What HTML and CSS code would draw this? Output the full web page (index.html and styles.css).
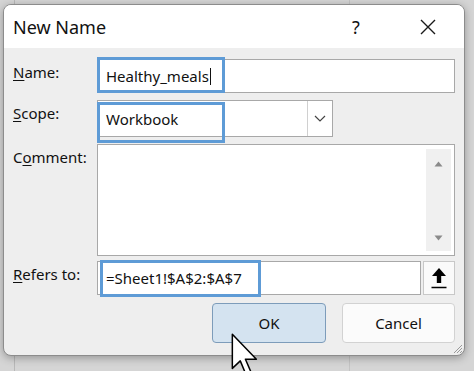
FILE: index.html
```html
<!DOCTYPE html>
<html lang="en">
<head>
    <meta charset="UTF-8">
    <title>New Name</title>
    <link rel="stylesheet" href="styles.css">
</head>
<body>
    <div class="dialog">
        <div class="titlebar">
            <span class="title">New Name</span>
            <span class="help">?</span>
            <svg class="close" width="16" height="16" viewBox="0 0 16 16">
                <path d="M1 1 L15 15 M15 1 L1 15" stroke="#1a1a1a" stroke-width="1.4" fill="none"/>
            </svg>
        </div>
        <div class="content">
            <div class="row row-name">
                <label class="label"><u>N</u>ame:</label>
                <div class="field field-name">
                    <span class="value">Healthy_meals</span><span class="caret"></span>
                    <div class="mark mark-name"></div>
                </div>
            </div>
            <div class="row row-scope">
                <label class="label"><u>S</u>cope:</label>
                <div class="field field-scope">
                    <span class="value">Workbook</span>
                    <div class="dropdown">
                        <svg width="12" height="7" viewBox="0 0 12 7">
                            <path d="M1 1 L6 6 L11 1" stroke="#444" stroke-width="1.2" fill="none"/>
                        </svg>
                    </div>
                    <div class="mark mark-scope"></div>
                </div>
            </div>
            <div class="row row-comment">
                <label class="label">C<u>o</u>mment:</label>
                <div class="field field-comment">
                    <div class="scrollbar">
                        <svg width="9" height="6" viewBox="0 0 9 6"><path d="M0.5 5.5 L4.5 0.5 L8.5 5.5 Z" fill="#8a8a8a"/></svg>
                        <svg width="9" height="6" viewBox="0 0 9 6"><path d="M0.5 0.5 L4.5 5.5 L8.5 0.5 Z" fill="#8a8a8a"/></svg>
                    </div>
                </div>
            </div>
            <div class="row row-refers">
                <label class="label"><u>R</u>efers to:</label>
                <div class="field field-refers">
                    <span class="value">=Sheet1!$A$2:$A$7</span>
                    <div class="mark mark-refers"></div>
                </div>
                <div class="collapse">
                    <svg width="18" height="24" viewBox="0 0 18 24">
                        <path d="M9 2 L16 10 L11.2 10 L11.2 17 L6.8 17 L6.8 10 L2 10 Z" fill="#000"/>
                        <path d="M1.5 21.5 L16.5 21.5" stroke="#000" stroke-width="1.4"/>
                    </svg>
                </div>
            </div>
            <div class="buttons">
                <button class="btn btn-ok">OK</button>
                <button class="btn btn-cancel">Cancel</button>
            </div>
        </div>
        <svg class="grip" width="12" height="12" viewBox="0 0 12 12">
            <path d="M11 3 L3 11 M11 6 L6 11 M11 9 L9 11" stroke="#9a9a9a" stroke-width="1"/>
        </svg>
    </div>
    <svg class="pointer" width="28" height="44" viewBox="0 0 13 20.5">
        <path d="M0.6 0.6 L0.6 16.5 L4.3 13 L6.8 19 L9.2 18 L6.7 12.2 L11.8 12.2 Z" fill="#fff" stroke="#000" stroke-width="0.7" stroke-linejoin="round"/>
    </svg>
</body>
</html>
```

FILE: styles.css
```css
body {
    margin: 0;
    width: 474px;
    height: 371px;
    overflow: hidden;
    position: relative;
    font-family: "Noto Sans", "Open Sans", sans-serif;
    color: #111;
    background-color: #d5d5d5;
    background-image:
        linear-gradient(to right, transparent 14px, #b8b8b8 14px, #b8b8b8 15px, transparent 15px),
        linear-gradient(to right, transparent 349px, #c4c4c4 349px, #c4c4c4 350px, transparent 350px);
}

.dialog {
    position: relative;
    margin: 4px 0 0 3px;
    width: 460px;
    height: 350px;
    border: 1px solid #8c8c8c;
    border-radius: 8px;
    overflow: hidden;
    background: #eeeeee;
    box-shadow: 0 2px 8px rgba(0, 0, 0, 0.3);
}

.titlebar {
    height: 43px;
    background: #ffffff;
    display: flex;
    align-items: center;
    padding: 0 0 0 9px;
}
.title {
    font-size: 18px;
    flex: 1;
    padding-top: 1px;
}
.help {
    font-size: 18px;
    width: 20px;
    margin-right: 48px;
    padding-top: 1px;
}
.close {
    margin-right: 28px;
}

.content {
    padding: 11px 9px 0 9px;
}
.row {
    display: flex;
}
.label {
    width: 84px;
    flex: none;
    font-size: 15px;
    line-height: 20px;
    padding-top: 3px;
}
.label u {
    text-underline-offset: 2px;
}

.field {
    position: relative;
    box-sizing: border-box;
    background: #ffffff;
    border: 1px solid #a8a8a8;
    display: flex;
    align-items: center;
    font-size: 15px;
}
.value {
    padding-left: 8px;
}

.row-name {
    height: 34px;
    margin-bottom: 7px;
}
.field-name {
    flex: 1;
}
.caret {
    width: 1px;
    height: 17px;
    background: #111;
    margin-left: 1px;
}

.row-scope {
    height: 37px;
    margin-bottom: 7px;
}
.field-scope {
    width: 236px;
    justify-content: space-between;
}
.dropdown {
    width: 25px;
    height: 100%;
    box-sizing: border-box;
    border-left: 1px solid #d0d0d0;
    display: flex;
    align-items: center;
    justify-content: center;
}

.row-comment {
    height: 112px;
    margin-bottom: 5px;
}
.field-comment {
    flex: 1;
    justify-content: flex-end;
    align-items: stretch;
    padding: 4px 3px;
}
.scrollbar {
    width: 25px;
    background: #f0f0f0;
    display: flex;
    flex-direction: column;
    justify-content: space-between;
    align-items: center;
    padding: 12px 0 10px;
}

.row-refers {
    height: 34px;
}
.field-refers {
    flex: 1;
}
.collapse {
    width: 32px;
    margin-left: 2px;
    box-sizing: border-box;
    background: #fafafa;
    border: 1px solid #c8c8c8;
    display: flex;
    align-items: center;
    justify-content: center;
}

.mark {
    position: absolute;
    box-sizing: border-box;
    border: 3px solid #5e9bd6;
}
.mark-name {
    left: -1px;
    top: -3px;
    width: 128px;
    height: 36px;
}
.mark-scope {
    left: -1px;
    top: 1px;
    width: 128px;
    height: 41px;
}
.mark-refers {
    left: 2px;
    top: -2px;
    width: 161px;
    height: 37px;
}

.buttons {
    display: flex;
    justify-content: flex-end;
    gap: 16px;
    margin-top: 8px;
}
.btn {
    height: 40px;
    font-family: "Noto Sans", "Open Sans", sans-serif;
    font-size: 15px;
    color: #111;
    border-radius: 4px;
    padding: 0;
}
.btn-ok {
    width: 114px;
    background: #d4e3f0;
    border: 1px solid #7d9cba;
}
.btn-cancel {
    width: 113px;
    background: #fbfbfb;
    border: 1px solid #d2d2d2;
}

.grip {
    position: absolute;
    right: 1px;
    bottom: 1px;
}

.pointer {
    position: absolute;
    left: 231px;
    top: 333px;
}
```
